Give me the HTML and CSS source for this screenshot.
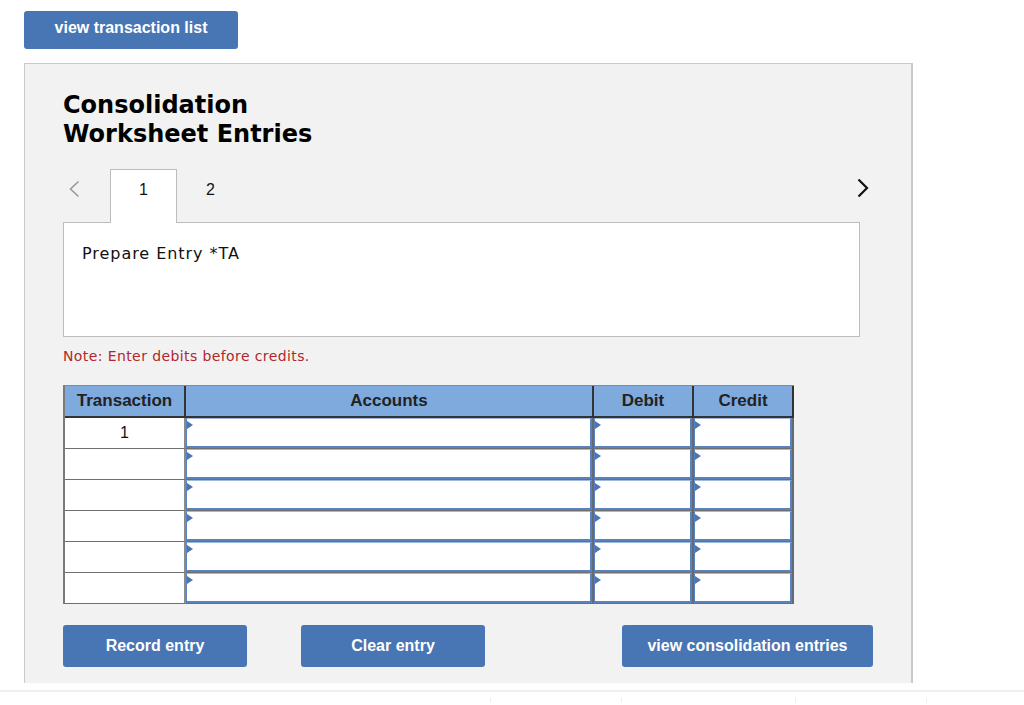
FILE: index.html
```html
<!DOCTYPE html>
<html>
<head>
<meta charset="utf-8">
<link rel="stylesheet" href="styles.css">
</head>
<body>
<div class="page">
  <button class="btn btn-top">view transaction list</button>
  <div class="panel">
    <h1 class="title">Consolidation<br>Worksheet Entries</h1>
    <div class="tabrow">
      <span class="chev chev-left">
        <svg width="12" height="18" viewBox="0 0 12 18"><path d="M10.5 1.5 L2.5 9 L10.5 16.5" fill="none" stroke="#9a9a9a" stroke-width="1.6"/></svg>
      </span>
      <div class="tab active">1</div>
      <div class="tab">2</div>
      <span class="spacer"></span>
      <span class="chev chev-right">
        <svg width="12" height="20" viewBox="0 0 12 20"><path d="M1.5 1.5 L10 10 L1.5 18.5" fill="none" stroke="#111" stroke-width="2.2"/></svg>
      </span>
    </div>
    <div class="entrybox">Prepare Entry *TA</div>
    <p class="note">Note: Enter debits before credits.</p>
    <table class="grid">
      <colgroup>
        <col class="c1"><col class="c2"><col class="c3"><col class="c4">
      </colgroup>
      <thead>
        <tr><th>Transaction</th><th>Accounts</th><th>Debit</th><th>Credit</th></tr>
      </thead>
      <tbody>
        <tr><td class="tx">1</td><td class="in"><div class="inp"></div></td><td class="in"><div class="inp"></div></td><td class="in"><div class="inp"></div></td></tr>
        <tr><td class="tx"></td><td class="in"><div class="inp"></div></td><td class="in"><div class="inp"></div></td><td class="in"><div class="inp"></div></td></tr>
        <tr><td class="tx"></td><td class="in"><div class="inp"></div></td><td class="in"><div class="inp"></div></td><td class="in"><div class="inp"></div></td></tr>
        <tr><td class="tx"></td><td class="in"><div class="inp"></div></td><td class="in"><div class="inp"></div></td><td class="in"><div class="inp"></div></td></tr>
        <tr><td class="tx"></td><td class="in"><div class="inp"></div></td><td class="in"><div class="inp"></div></td><td class="in"><div class="inp"></div></td></tr>
        <tr><td class="tx"></td><td class="in"><div class="inp"></div></td><td class="in"><div class="inp"></div></td><td class="in"><div class="inp"></div></td></tr>
      </tbody>
    </table>
    <div class="actions">
      <button class="btn btn-record">Record entry</button>
      <button class="btn btn-clear">Clear entry</button>
      <button class="btn btn-view">view consolidation entries</button>
    </div>
  </div>
  <div class="footer">
    <span class="fc f1"></span><span class="fc f2"></span><span class="fc f3"></span><span class="fc f4"></span><span class="fc f5"></span>
  </div>
</div>
</body>
</html>
```
FILE: styles.css
```css
html, body {
  margin: 0;
  padding: 0;
  background: #fff;
}
.page {
  padding-top: 11px;
  font-family: "DejaVu Sans", Verdana, sans-serif;
}
.btn {
  display: block;
  border: none;
  border-radius: 3px;
  background: #4875b4;
  color: #fff;
  font-family: "Liberation Sans", Arial, sans-serif;
  font-weight: bold;
  font-size: 16px;
  padding: 0;
  cursor: pointer;
}
.btn-top {
  margin-left: 24px;
  width: 214px;
  height: 38px;
  padding-bottom: 4px;
}
.panel {
  margin-top: 14px;
  margin-left: 24px;
  background: #f2f2f2;
  border: 1px solid #c9c9c9;
  border-right: 2px solid #c9c9c9;
  border-bottom: none;
  padding: 27px 0 0 38px;
  box-sizing: content-box;
  width: 848px;
  height: 592px;
}
.title {
  margin: 0;
  font-family: "DejaVu Sans", Verdana, sans-serif;
  font-weight: bold;
  font-size: 24px;
  line-height: 29px;
  color: #000;
}
.tabrow {
  margin-top: 20px;
  display: flex;
  align-items: flex-start;
  width: 810px;
  position: relative;
  z-index: 1;
  margin-bottom: -1px;
}
.chev {
  display: flex;
}
.chev-left {
  margin-left: 5px;
  margin-top: 11px;
  width: 42px;
}
.chev-right {
  margin-top: 9px;
  margin-right: 4px;
}
.spacer {
  flex: 1;
}
.tab {
  width: 67px;
  height: 54px;
  box-sizing: border-box;
  text-align: center;
  font-family: "Liberation Sans", Arial, sans-serif;
  font-size: 16px;
  line-height: 20px;
  padding-top: 10px;
  color: #111;
  border: 1px solid transparent;
  border-bottom: none;
}
.tab.active {
  background: #fff;
  border-color: #bdbdbd;
}
.entrybox {
  width: 797px;
  height: 115px;
  box-sizing: border-box;
  background: #fff;
  border: 1px solid #bdbdbd;
  padding: 21px 0 0 18px;
  font-size: 16px;
  line-height: 19px;
  letter-spacing: 0.95px;
  color: #111;
}
.note {
  margin: 11px 0 0 0;
  font-size: 14px;
  line-height: 17px;
  letter-spacing: 0.4px;
  color: #b0272d;
}
.grid {
  margin-top: 20px;
  border-spacing: 0;
  table-layout: fixed;
  width: 729px;
  border-top: 1px solid #8a8a8a;
  border-left: 2px solid #7a7a7a;
  font-family: "Liberation Sans", Arial, sans-serif;
}
.c1 { width: 121px; }
.c2 { width: 408px; }
.c3 { width: 100px; }
.c4 { width: 100px; }
.grid th {
  background: #7faade;
  color: #222;
  font-size: 17px;
  font-weight: bold;
  height: 30px;
  padding: 0;
  border-right: 2px solid #333;
  border-bottom: 2px solid #333;
}
.grid td {
  height: 30px;
  padding: 0;
  border-bottom: 1px solid #6f6f6f;
  vertical-align: top;
}
.grid td.tx {
  background: #fff;
  text-align: center;
  font-size: 16px;
  line-height: 30px;
  color: #111;
  border-right: 2px solid #8a8a8a;
}
.grid td.in {
  border-right: 2px solid #626a78;
  background: #fff;
}
.inp {
  position: relative;
  height: 30px;
  box-sizing: border-box;
  border: 2px solid #5a82bd;
  border-top: 1px solid #9fb9dd;
  border-left: 1px solid #5a82bd;
  background: #fff;
}
.inp::before {
  content: "";
  position: absolute;
  left: 0;
  top: 2px;
  border-top: 4px solid transparent;
  border-bottom: 4px solid transparent;
  border-left: 6px solid #4a76b8;
}
.actions {
  margin-top: 21px;
  display: flex;
}
.actions .btn {
  height: 42px;
}
.btn-record {
  width: 184px;
}
.btn-clear {
  width: 184px;
  margin-left: 54px;
}
.btn-view {
  width: 251px;
  margin-left: 137px;
}
.footer {
  margin-top: 7px;
  border-top: 2px solid #f0f0f0;
  display: flex;
  height: 13px;
  padding-top: 6px;
  box-sizing: border-box;
}
.fc {
  display: block;
  height: 100%;
}
.f1 { width: 490px; }
.f2 { width: 130px; border-left: 1px solid #eeeeee; }
.f3 { width: 173px; border-left: 1px solid #eeeeee; }
.f4 { width: 130px; border-left: 1px solid #eeeeee; }
.f5 { flex: 1; border-left: 1px solid #eeeeee; }
```
